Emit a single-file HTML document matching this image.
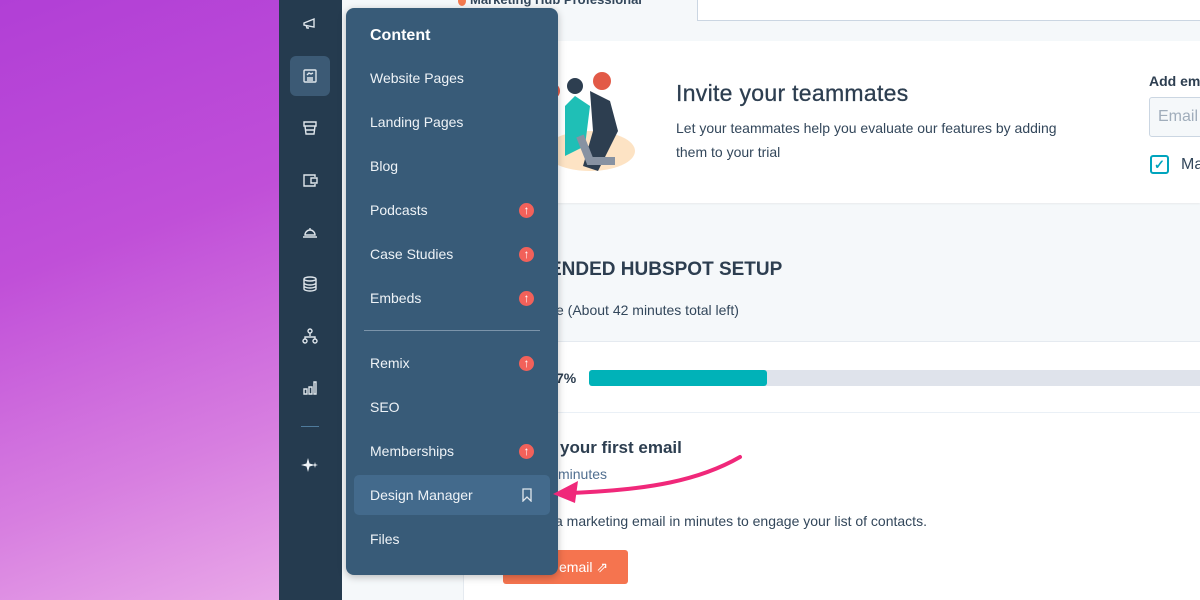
<!DOCTYPE html><html><head><style>
*{margin:0;padding:0;box-sizing:border-box}
body{width:1200px;height:600px;overflow:hidden;position:relative;font-family:"Liberation Sans",sans-serif;background:#f5f8fa;color:#33475b}
.a{position:absolute}
.bg{left:0;top:0;width:279px;height:600px;background:linear-gradient(160deg,#b13fd6 0%,#c04fd8 40%,#d77ee0 75%,#e9a8e8 100%)}
.sb{left:279px;top:0;width:63px;height:600px;background:#253b4f}
.menu{left:346px;top:8px;width:212px;height:567px;background:#385b78;border-radius:8px;box-shadow:0 2px 8px rgba(0,0,0,.25)}
.mi{position:absolute;left:24px;color:#eef3f7;font-size:14px}
.up{position:absolute;left:173px;width:15px;height:15px;border-radius:50%;background:#f2615a;color:#fff;font-size:12px;font-weight:bold;text-align:center;line-height:15px}
.ic{position:absolute;left:21px;width:20px;height:20px}
</style></head><body>
<div class="a bg"></div>
<div class="a sb">
<svg class="ic" style="top:14px" viewBox="0 0 20 20" fill="none" stroke="#dfe6ec" stroke-width="1.4"><path d="M4 9l10-4v8L4 11z M6 11l1 3h2"/></svg>
<div class="a" style="left:11px;top:56px;width:40px;height:40px;background:#3c5a75;border-radius:6px"></div>
<svg class="ic" style="top:66px" viewBox="0 0 20 20" fill="none" stroke="#dfe6ec" stroke-width="1.4"><rect x="4" y="4" width="12" height="12" rx="1"/><path d="M7 12h6M7 14h6M7 9l2-2 2 1 2-1"/></svg>
<svg class="ic" style="top:118px" viewBox="0 0 20 20" fill="none" stroke="#dfe6ec" stroke-width="1.4"><path d="M4 4h12v4H4zM5 8l1 8h8l1-8M6 12h8"/></svg>
<svg class="ic" style="top:170px" viewBox="0 0 20 20" fill="none" stroke="#dfe6ec" stroke-width="1.4"><path d="M15 7V5H4v11h11v-2M11 8h6v5h-6z"/></svg>
<svg class="ic" style="top:222px" viewBox="0 0 20 20" fill="none" stroke="#dfe6ec" stroke-width="1.4"><path d="M3 15h14M5 13a5 5 0 0110 0zM10 6v2"/></svg>
<svg class="ic" style="top:274px" viewBox="0 0 20 20" fill="none" stroke="#dfe6ec" stroke-width="1.4"><ellipse cx="10" cy="5" rx="6" ry="2"/><path d="M4 5v10c0 1 3 2 6 2s6-1 6-2V5M4 9c0 1 3 2 6 2s6-1 6-2M4 12c0 1 3 2 6 2s6-1 6-2"/></svg>
<svg class="ic" style="top:326px" viewBox="0 0 20 20" fill="none" stroke="#dfe6ec" stroke-width="1.4"><circle cx="10" cy="5" r="2"/><circle cx="5" cy="15" r="2"/><circle cx="15" cy="15" r="2"/><path d="M10 7v3M5 13v-2h10v2"/></svg>
<svg class="ic" style="top:378px" viewBox="0 0 20 20" fill="none" stroke="#dfe6ec" stroke-width="1.4"><path d="M4 11h3v5H4zM9 9h3v7H9zM14 4h2v12h-2z"/></svg>
<div class="a" style="left:22px;top:426px;width:18px;height:1px;background:#4f7b9c"></div>
<svg class="ic" style="top:455px" viewBox="0 0 20 20" fill="#eef3f7"><path d="M8 3l1.5 5.5L15 10l-5.5 1.5L8 17l-1.5-5.5L1 10l5.5-1.5z"/><path d="M15 7l.6 2.4L18 10l-2.4.6L15 13l-.6-2.4L12 10l2.4-.6z"/></svg>
</div>
<div class="a" style="left:423px;top:0;width:275px;height:21px;background:#f5f8fa;border-right:1px solid #cbd6e2"></div>
<div class="a" style="left:470px;top:-8px;font-size:13px;font-weight:bold;color:#33475b">Marketing Hub Professional</div>
<div class="a" style="left:458px;top:-4px;width:8px;height:10px;background:#f57a4f;border-radius:50%"></div>
<div class="a" style="left:698px;top:0;width:502px;height:21px;background:#fff;border-bottom:1px solid #cbd6e2"></div>
<div class="a" style="left:480px;top:41px;width:720px;height:162px;background:#fff;box-shadow:0 1px 2px rgba(0,0,0,.06)"></div>
<svg class="a" style="left:540px;top:66px" width="100" height="110" viewBox="0 0 100 110"><ellipse cx="50" cy="85" rx="45" ry="20" fill="#fde3c4"/><path d="M25 40l10-10 15 10-5 40-20 10z" fill="#1fbfb6"/><path d="M50 25l20 10 8 30-20 40-15-5 10-35z" fill="#2d3e50"/><circle cx="35" cy="20" r="8" fill="#2d3e50"/><circle cx="62" cy="15" r="9" fill="#e25a47"/><circle cx="12" cy="25" r="8" fill="#e25a47"/><path d="M40 70l10 25 25 0" stroke="#8792a2" stroke-width="8" fill="none"/></svg>
<div class="a" style="left:676px;top:80px;font-size:23px;color:#2d3e50;letter-spacing:.3px;-webkit-text-stroke:.3px #2d3e50">Invite your teammates</div>
<div class="a" style="left:676px;top:116px;font-size:14px;line-height:24px;color:#33475b">Let your teammates help you evaluate our features by adding<br>them to your trial</div>
<div class="a" style="left:1149px;top:73px;font-size:14px;font-weight:bold;color:#2d3e50;white-space:nowrap">Add em</div>
<div class="a" style="left:1149px;top:97px;width:60px;height:40px;background:#f5f8fa;border:1px solid #cbd6e2;border-radius:3px;padding:10px 8px;font-size:16px;color:#a0adbb">Email</div>
<div class="a" style="left:1150px;top:155px;width:19px;height:19px;border:2px solid #00a4bd;border-radius:3px;color:#00a4bd;font-size:13px;text-align:center;line-height:15px;font-weight:bold">✓</div>
<div class="a" style="left:1181px;top:156px;font-size:16px">Ma</div>
<div class="a" style="left:549px;top:259px;font-size:19px;font-weight:bold;color:#2d3e50">ENDED HUBSPOT SETUP</div>
<div class="a" style="left:556px;top:302px;font-size:14px;color:#33475b">e (About 42 minutes total left)</div>
<div class="a" style="left:463px;top:341px;width:737px;height:259px;background:#fff;border-left:1px solid #e5eaf0;border-top:1px solid #e5eaf0"></div>
<div class="a" style="left:463px;top:412px;width:737px;height:1px;background:#eaf0f6"></div>
<div class="a" style="left:556px;top:370px;font-size:14px;font-weight:bold;color:#2d3e50">7%</div>
<div class="a" style="left:589px;top:370px;width:620px;height:16px;background:#dfe3eb;border-radius:3px"></div>
<div class="a" style="left:589px;top:370px;width:178px;height:16px;background:#00b2b8;border-radius:3px"></div>
<div class="a" style="left:560px;top:438px;font-size:17px;font-weight:bold;color:#2d3e50">your first email</div>
<div class="a" style="left:558px;top:466px;font-size:14px;color:#516f90">minutes</div>
<div class="a" style="left:555px;top:513px;font-size:14px;color:#33475b">a marketing email in minutes to engage your list of contacts.</div>
<div class="a" style="left:503px;top:550px;width:125px;height:34px;background:#f5744f;border-radius:3px;color:#fff;font-size:14px;padding:9px 0 0 56px">email ⇗</div>
<div class="a menu">
<div class="mi" style="top:19px;font-size:16px;font-weight:bold;color:#fff">Content</div>
<div class="mi" style="top:62px">Website Pages</div>
<div class="mi" style="top:106px">Landing Pages</div>
<div class="mi" style="top:150px">Blog</div>
<div class="mi" style="top:194px">Podcasts</div><div class="up" style="top:195px">↑</div>
<div class="mi" style="top:238px">Case Studies</div><div class="up" style="top:239px">↑</div>
<div class="mi" style="top:282px">Embeds</div><div class="up" style="top:283px">↑</div>
<div style="position:absolute;left:18px;top:322px;width:176px;height:1px;background:#7b94aa"></div>
<div class="mi" style="top:347px">Remix</div><div class="up" style="top:348px">↑</div>
<div class="mi" style="top:391px">SEO</div>
<div class="mi" style="top:435px">Memberships</div><div class="up" style="top:436px">↑</div>
<div style="position:absolute;left:8px;top:467px;width:196px;height:40px;background:#436a8c;border-radius:5px"></div>
<div class="mi" style="top:479px">Design Manager</div>
<svg style="position:absolute;left:175px;top:480px" width="12" height="14" viewBox="0 0 12 14" fill="none" stroke="#dfe6ec" stroke-width="1.3"><path d="M2 1h8v12L6 9l-4 4z"/></svg>
<div class="mi" style="top:523px">Files</div>
</div>
<svg class="a" style="left:540px;top:450px" width="210" height="60" viewBox="0 0 210 60"><path d="M200 7C160 30 110 40 30 43" stroke="#f0287a" stroke-width="4" fill="none" stroke-linecap="round"/><path d="M13 44l25-13-3 22z" fill="#f0287a"/></svg>
</body></html>
